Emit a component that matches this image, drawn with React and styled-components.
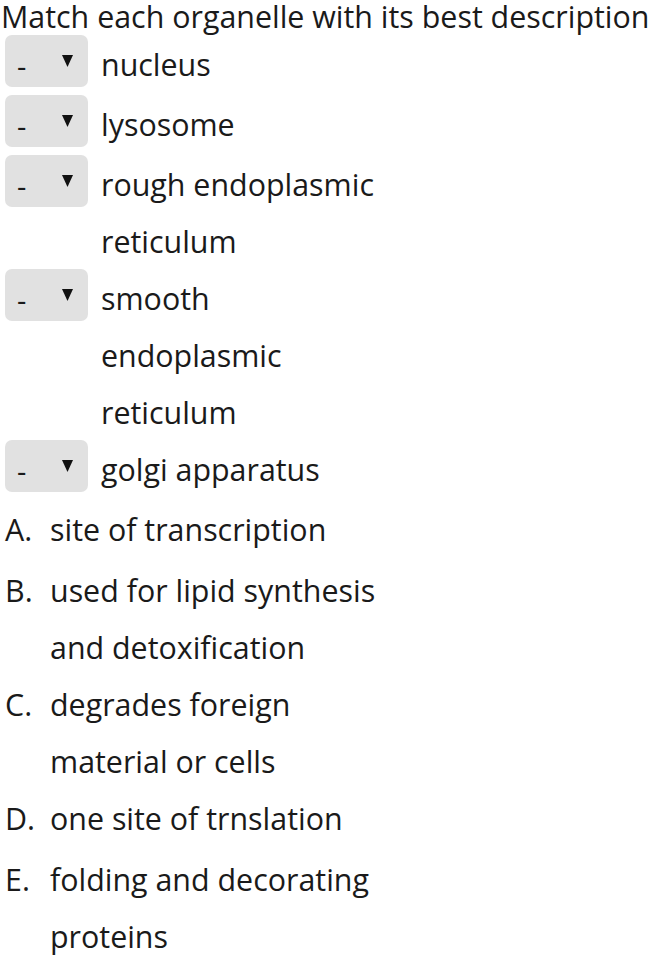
import styled, { createGlobalStyle } from 'styled-components';

const GlobalStyle = createGlobalStyle`
  html, body {
    margin: 0;
    padding: 0;
    background: #ffffff;
  }
  body {
    font-family: "Open Sans", "Liberation Sans", sans-serif;
    color: #1a1a1a;
  }
`;

const Page = styled.div`
  width: 651px;
  height: 958px;
  overflow: hidden;
  padding-left: 5px;
  box-sizing: border-box;
  font-size: 30.4px;
`;

const Title = styled.div`
  width: max-content;
  line-height: 33px;
  white-space: nowrap;
  margin-left: -4px;
`;

const List = styled.div`
  width: 381px;
  display: flex;
  flex-direction: column;
`;

const MatchRow = styled.div`
  display: flex;
  align-items: flex-start;
  min-height: 60px;
`;

const Dropdown = styled.div`
  flex: none;
  width: 83px;
  height: 52px;
  margin-top: 2px;
  margin-right: 13px;
  box-sizing: border-box;
  padding: 0 15px 0 12px;
  display: flex;
  align-items: center;
  justify-content: space-between;
  background: #e1e1e1;
  border-radius: 7px;
`;

const Dash = styled.span`
  font-size: 29px;
  line-height: 1;
  position: relative;
  top: 4px;
`;

const Label = styled.div`
  line-height: 57px;
  padding-top: 3px;
  margin-bottom: -3px;
  flex: 1;
`;

const AnswerRow = styled.div`
  display: flex;
  align-items: flex-start;
  min-height: 61px;
`;

const Letter = styled.div`
  flex: none;
  width: 45px;
  line-height: 57px;
  padding-top: 3px;
`;

const Arrow = () => (
  <svg width="11" height="12" viewBox="0 0 11 12">
    <polygon points="0,0 11,0 5.5,12" fill="#111" />
  </svg>
);

const organelles = [
  'nucleus',
  'lysosome',
  'rough endoplasmic reticulum',
  'smooth endoplasmic reticulum',
  'golgi apparatus',
];

const answers = [
  ['A.', 'site of transcription'],
  ['B.', 'used for lipid synthesis and detoxification'],
  ['C.', 'degrades foreign material or cells'],
  ['D.', 'one site of trnslation'],
  ['E.', 'folding and decorating proteins'],
];

export default function App() {
  return (
    <>
      <GlobalStyle />
      <Page>
        <Title>Match each organelle with its best description</Title>
        <List>
          {organelles.map((name) => (
            <MatchRow key={name}>
              <Dropdown>
                <Dash>-</Dash>
                <Arrow />
              </Dropdown>
              <Label>{name}</Label>
            </MatchRow>
          ))}
          {answers.map(([letter, text]) => (
            <AnswerRow key={letter}>
              <Letter>{letter}</Letter>
              <Label>{text}</Label>
            </AnswerRow>
          ))}
        </List>
      </Page>
    </>
  );
}
